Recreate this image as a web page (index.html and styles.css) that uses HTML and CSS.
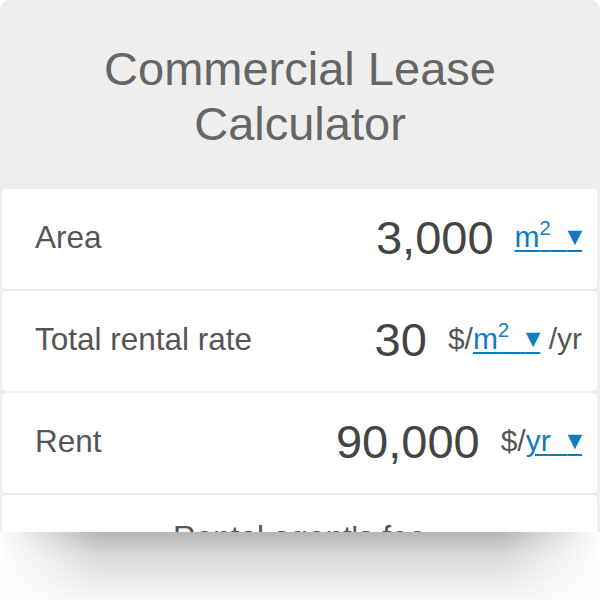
FILE: index.html
```html
<!DOCTYPE html>
<html lang="en">
<head>
    <meta charset="UTF-8">
    <meta name="viewport" content="width=device-width, initial-scale=1.0">
    <title>Commercial Lease Calculator</title>
    <link rel="stylesheet" href="styles.css">
</head>
<body>
    <div class="calc">
        <h1 class="calc-title">Commercial Lease Calculator</h1>

        <div class="calc-row">
            <span class="row-label">Area</span>
            <span class="row-value">3,000</span>
            <span class="row-unit"><a class="unit-link">m<sup>2</sup>&nbsp; <span class="caret">▼</span></a></span>
        </div>

        <div class="calc-row">
            <span class="row-label">Total rental rate</span>
            <span class="row-value">30</span>
            <span class="row-unit">$/<a class="unit-link">m<sup>2</sup>&nbsp; <span class="caret">▼</span></a> /yr</span>
        </div>

        <div class="calc-row">
            <span class="row-label">Rent</span>
            <span class="row-value">90,000</span>
            <span class="row-unit">$/<a class="unit-link">yr&nbsp; <span class="caret">▼</span></a></span>
        </div>

        <div class="calc-row calc-row-center">
            <span class="row-label">Rental agent's fee</span>
        </div>
    </div>
    <div class="calc-shadow"></div>
</body>
</html>
```

FILE: styles.css
```css
/* Base */
body {
    margin: 0;
    background: #fff;
    font-family: 'Liberation Sans', Arial, sans-serif;
}

/* Calculator card */
.calc {
    height: 532px;
    overflow: hidden;
    background: #eee;
    border-radius: 10px 10px 0 0;
}

/* Fading shadow under the cut-off card */
.calc-shadow {
    height: 68px;
    background:
        linear-gradient(to right, #fff 0, rgba(255, 255, 255, 0) 100px, rgba(255, 255, 255, 0) 500px, #fff 600px),
        linear-gradient(#b4b4b4, #dadada 35%, #f7f7f7);
}

.calc-title {
    margin: 0 auto;
    max-width: 440px;
    padding: 41px 0 38px;
    font-size: 47px;
    line-height: 55px;
    font-weight: normal;
    text-align: center;
    color: #666;
}

/* Rows */
.calc-row {
    display: flex;
    align-items: center;
    height: 100px;
    margin: 0 3px 2px 2px;
    padding: 0 15px 4px 33px;
    box-sizing: border-box;
    background: #fff;
    border-radius: 4px;
}

.calc-row-center {
    justify-content: center;
    align-items: flex-start;
    padding: 24px 0 0;
}

.row-label {
    flex: 1;
    font-size: 31.5px;
    color: #555;
}

.calc-row-center .row-label {
    flex: none;
}

.row-value {
    font-size: 47px;
    color: #444;
    margin-right: 21px;
}

.row-unit {
    font-size: 30px;
    color: #555;
}

.unit-link {
    color: #0f7cbf;
    text-decoration: underline;
    text-decoration-thickness: 2px;
    text-underline-offset: 3px;
}

.unit-link sup {
    font-size: 20px;
    line-height: 0;
    vertical-align: 12px;
}

.caret {
    font-family: 'DejaVu Sans', sans-serif;
    font-size: 19px;
    vertical-align: 4px;
}
```
